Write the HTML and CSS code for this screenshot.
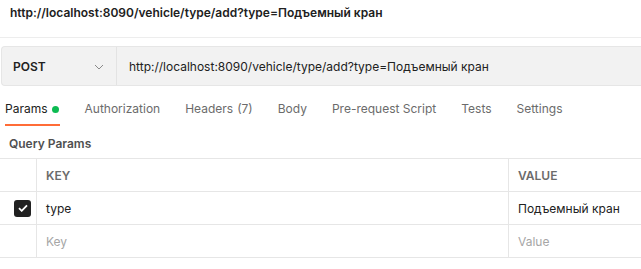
FILE: index.html
```html
<!DOCTYPE html>
<html lang="ru">
<head>
<meta charset="utf-8">
<title>Postman request</title>
<link rel="stylesheet" href="styles.css">
</head>
<body>
<div class="title">http://localhost:8090/vehicle/type/add?type=Подъемный кран</div>
<div class="reqbar">
  <div class="method">
    <span class="method-name">POST</span>
    <svg class="chev" width="10" height="6" viewBox="0 0 10 6"><path d="M1 1 L5 5 L9 1" fill="none" stroke="#8a8a8a" stroke-width="1"/></svg>
  </div>
  <div class="url">http://localhost:8090/vehicle/type/add?type=Подъемный кран</div>
</div>
<div class="tabs">
  <div class="tab active">Params <span class="dot"></span></div>
  <div class="tab">Authorization</div>
  <div class="tab">Headers <span class="count">(7)</span></div>
  <div class="tab">Body</div>
  <div class="tab">Pre-request Script</div>
  <div class="tab">Tests</div>
  <div class="tab">Settings</div>
</div>
<div class="section">Query Params</div>
<div class="table">
  <div class="row head">
    <div class="cell chk"></div>
    <div class="cell key">KEY</div>
    <div class="cell val">VALUE</div>
  </div>
  <div class="row">
    <div class="cell chk"><span class="box"><svg width="10" height="8" viewBox="0 0 10 8"><path d="M1 4.2 L3.7 6.8 L9 1.3" fill="none" stroke="#fff" stroke-width="1.8"/></svg></span></div>
    <div class="cell key">type</div>
    <div class="cell val">Подъемный кран</div>
  </div>
  <div class="row">
    <div class="cell chk"></div>
    <div class="cell key ph">Key</div>
    <div class="cell val ph">Value</div>
  </div>
</div>
</body>
</html>
```

FILE: styles.css
```css
* { box-sizing: border-box; }
body {
  margin: 0;
  font-family: Inter, "Noto Sans", sans-serif;
  font-size: 12px;
  color: #212121;
  background: #fff;
  overflow: hidden;
}
.title {
  height: 38px;
  padding: 5px 0 0 10px;
  font-weight: 600;
  line-height: 15px;
  border-bottom: 1px solid #ededed;
}
.reqbar {
  display: flex;
  margin: 8px 0 0 1px;
  height: 40px;
  background: #f2f2f2;
  border: 1px solid #e6e6e6;
  border-right: none;
  border-radius: 4px 0 0 4px;
}
.method {
  width: 115px;
  display: flex;
  align-items: center;
  justify-content: space-between;
  padding: 0 12px 0 11px;
  border-right: 1px solid #e3e3e3;
}
.method-name {
  font-weight: 600;
  color: #212121;
}
.chev { margin-top: 1px; }
.url {
  display: flex;
  align-items: center;
  padding-left: 12px;
  color: #212121;
}
.tabs {
  display: flex;
  gap: 25px;
  margin-top: 15px;
  padding-left: 5px;
  height: 25px;
}
.tab {
  color: #6b6b6b;
  line-height: 16px;
  height: 25px;
  display: flex;
  align-items: flex-start;
}
.tab.active {
  color: #212121;
  border-bottom: 2px solid #ff6c37;
  padding-right: 1px;
}
.dot {
  display: inline-block;
  width: 7px;
  height: 7px;
  border-radius: 50%;
  background: #0cbb52;
  margin: 5px 0 0 4px;
}
.count { margin-left: 4px; }
.section {
  padding: 10px 0 0 9px;
  height: 32px;
  font-weight: 600;
  color: #505050;
  line-height: 16px;
}
.table {
  border-top: 1px solid #e6e6e6;
}
.row {
  display: flex;
  height: 33px;
  border-bottom: 1px solid #e6e6e6;
}
.cell {
  display: flex;
  align-items: center;
}
.chk {
  width: 37px;
  border-right: 1px solid #e6e6e6;
  justify-content: flex-end;
  padding-right: 5px;
}
.key {
  width: 472px;
  padding-left: 9px;
  border-right: 1px solid #e6e6e6;
}
.val {
  flex: 1;
  padding-left: 9px;
  white-space: nowrap;
}
.head .cell { font-weight: 600; color: #6b6b6b; }
.ph { color: #a6a6a6; }
.box {
  width: 17px;
  height: 17px;
  border-radius: 3px;
  background: #212121;
  display: flex;
  align-items: center;
  justify-content: center;
}
```
